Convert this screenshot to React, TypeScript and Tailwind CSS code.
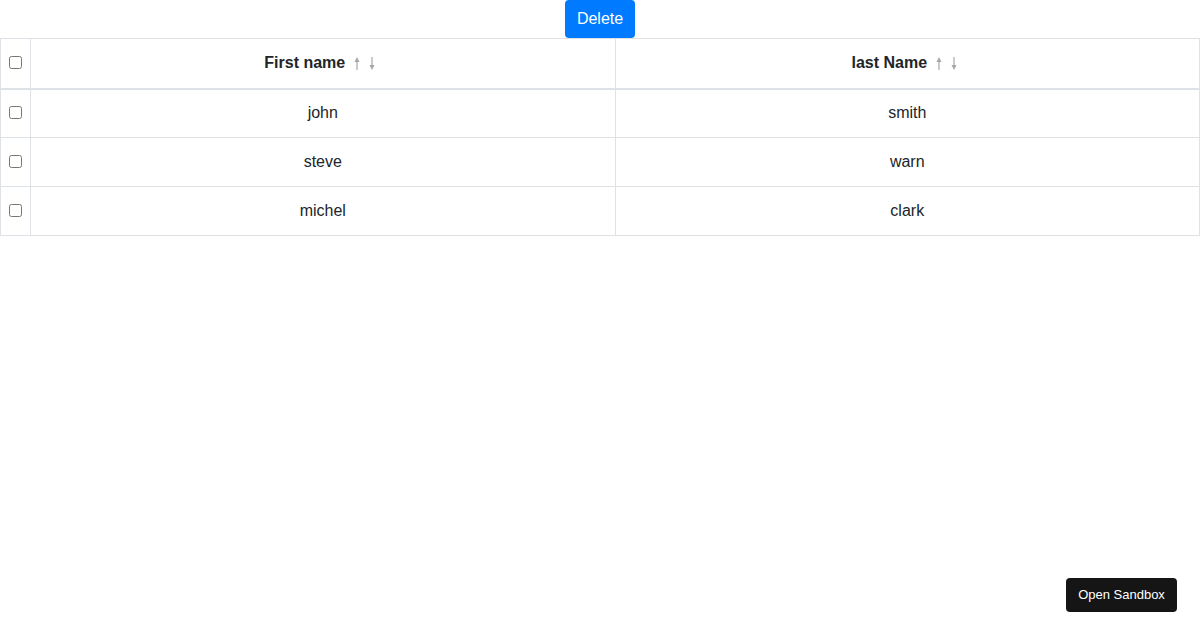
import React from "react";

const rows = [
  { first: "john", last: "smith" },
  { first: "steve", last: "warn" },
  { first: "michel", last: "clark" },
];

function Caret() {
  return (
    <span className="inline-flex items-center ml-[9px] mr-[6px] gap-[9px] align-middle">
      <svg width="6" height="15" viewBox="0 0 6 15" className="opacity-40">
        <path d="M3 1 L5.5 6 L3.6 6 L3.6 14 L2.4 14 L2.4 6 L0.5 6 Z" fill="#212529" />
      </svg>
      <svg width="6" height="15" viewBox="0 0 6 15" className="opacity-40">
        <path d="M3 14 L5.5 9 L3.6 9 L3.6 1 L2.4 1 L2.4 9 L0.5 9 Z" fill="#212529" />
      </svg>
    </span>
  );
}

export default function App() {
  return (
    <div
      className="relative w-[1200px] h-[630px] bg-white text-[#212529] text-[16px]"
      style={{ fontFamily: '"Liberation Sans", Arial, sans-serif' }}
    >
      <div className="flex justify-center">
        <button className="h-[38px] px-[12px] bg-[#007bff] text-white rounded-[4px] text-[16px] leading-[24px]">
          Delete
        </button>
      </div>
      <table className="w-full border-collapse table-fixed">
        <colgroup>
          <col className="w-[30px]" />
          <col />
          <col />
        </colgroup>
        <thead>
          <tr className="h-[50px]">
            <th className="border border-[#dee2e6] border-b-2 text-center align-middle">
              <input type="checkbox" className="block mx-auto w-[13px] h-[13px] mt-[-2px]" />
            </th>
            <th className="border border-[#dee2e6] border-b-2 font-bold text-center">
              <span className="inline-flex items-center">
                First name
                <Caret />
              </span>
            </th>
            <th className="border border-[#dee2e6] border-b-2 font-bold text-center">
              <span className="inline-flex items-center">
                last Name
                <Caret />
              </span>
            </th>
          </tr>
        </thead>
        <tbody>
          {rows.map((r) => (
            <tr key={r.first} className="h-[49px]">
              <td className="border border-[#dee2e6] text-center">
                <input type="checkbox" className="block mx-auto w-[13px] h-[13px] mt-[-2px]" />
              </td>
              <td className="border border-[#dee2e6] text-center">{r.first}</td>
              <td className="border border-[#dee2e6] text-center">{r.last}</td>
            </tr>
          ))}
        </tbody>
      </table>
      <div className="absolute left-[1066px] top-[578px] w-[111px] h-[34px] bg-[#151515] rounded-[4px] text-white text-[13px] flex items-center justify-center">
        Open Sandbox
      </div>
    </div>
  );
}
